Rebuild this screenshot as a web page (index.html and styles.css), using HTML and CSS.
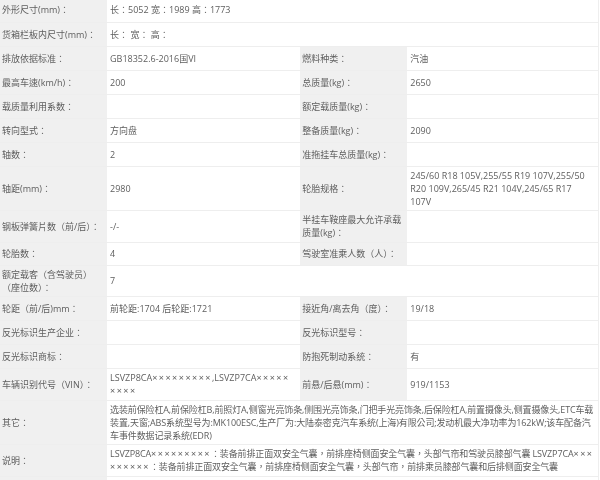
FILE: index.html
```html
<!DOCTYPE html>
<html lang="zh-TW">
<head>
<meta charset="utf-8">
<title>车辆参数</title>
<link rel="stylesheet" href="styles.css">
</head>
<body>
<table class="spec">
<colgroup><col class="c-l"><col class="c-v"><col class="c-l"><col class="c-v2"></colgroup>
<tr class="r24"><th>外形尺寸(mm)：</th><td colspan="3">长：5052 宽：1989 高：1773</td></tr>
<tr class="r24"><th>货箱栏板内尺寸(mm)：</th><td colspan="3">长： 宽： 高：</td></tr>
<tr class="r24"><th>排放依据标准：</th><td>GB18352.6-2016国VI</td><th>燃料种类：</th><td>汽油</td></tr>
<tr class="r24"><th>最高车速(km/h)：</th><td>200</td><th>总质量(kg)：</th><td>2650</td></tr>
<tr class="r24"><th>载质量利用系数：</th><td></td><th>额定载质量(kg)：</th><td></td></tr>
<tr class="r24"><th>转向型式：</th><td>方向盘</td><th>整备质量(kg)：</th><td>2090</td></tr>
<tr class="r24"><th>轴数：</th><td>2</td><th>准拖挂车总质量(kg)：</th><td></td></tr>
<tr class="r44"><th>轴距(mm)：</th><td>2980</td><th>轮胎规格：</th><td>245/60 R18 105V,255/55 R19 107V,255/50 R20 109V,265/45 R21 104V,245/65 R17 107V</td></tr>
<tr class="r32"><th>钢板弹簧片数（前/后）：</th><td>-/-</td><th>半挂车鞍座最大允许承载质量(kg)：</th><td></td></tr>
<tr class="r23"><th>轮胎数：</th><td>4</td><th>驾驶室准乘人数（人）：</th><td></td></tr>
<tr class="r31"><th>额定载客（含驾驶员）（座位数）：</th><td colspan="3">7</td></tr>
<tr class="r24"><th>轮距（前/后)mm：</th><td>前轮距:1704 后轮距:1721</td><th>接近角/离去角（度）：</th><td>19/18</td></tr>
<tr class="r24"><th>反光标识生产企业：</th><td></td><th>反光标识型号：</th><td></td></tr>
<tr class="r24"><th>反光标识商标：</th><td></td><th>防抱死制动系统：</th><td>有</td></tr>
<tr class="r32"><th>车辆识别代号（VIN）：</th><td>LSVZP8CA<span class="x">×××××××××</span>,LSVZP7CA<span class="x">×××××××××</span></td><th>前悬/后悬(mm)：</th><td>919/1153</td></tr>
<tr class="r44"><th>其它：</th><td class="long" colspan="3">选装前保险杠A,前保险杠B,前照灯A,侧窗光亮饰条,侧围光亮饰条,门把手光亮饰条,后保险杠A,前置摄像头,侧置摄像头,ETC车载装置,天窗;ABS系统型号为:MK100ESC,生产厂为:大陆泰密克汽车系统(上海)有限公司;发动机最大净功率为162kW;该车配备汽车事件数据记录系统(EDR)</td></tr>
<tr class="r32"><th>说明：</th><td class="long" colspan="3">LSVZP8CA<span class="x">×××××××××</span>：装备前排正面双安全气囊，前排座椅侧面安全气囊，头部气帘和驾驶员膝部气囊 LSVZP7CA<span class="x">×××××××××</span>：装备前排正面双安全气囊，前排座椅侧面安全气囊，头部气帘，前排乘员膝部气囊和后排侧面安全气囊</td></tr>
<tr class="r24"><th></th><td colspan="3"></td></tr>
</table>
</body>
</html>
```
FILE: styles.css
```css
html, body {
  margin: 0;
  padding: 0;
  background: #fff;
  overflow: hidden;
  height: 480px;
}
.spec {
  width: 599px;
  margin-top: -2px;
  border-collapse: collapse;
  table-layout: fixed;
  font-family: "Open Sans", "Noto Sans CJK TC", sans-serif;
  font-size: 9px;
  line-height: 13px;
  color: #5e5e5e;
  border-right: 1px solid #eee;
  filter: blur(0.3px);
}
.c-l { width: 107px; }
.c-v { width: 193px; }
.c-v2 { width: 191px; }
.spec th, .spec td {
  padding: 0 6px 0 3px;
  border-bottom: 1px solid #eee;
  font-weight: normal;
  text-align: left;
  vertical-align: middle;
  overflow: hidden;
}
.spec th {
  background: #f0f0f0;
  padding: 0 2px;
}
.spec .long {
  padding-right: 3px;
  letter-spacing: -0.13px;
}
.x { letter-spacing: 1.5px; word-break: break-all; }
.r23 { height: 23px; }
.r24 { height: 24px; }
.r31 { height: 31px; }
.r32 { height: 32px; }
.r44 { height: 44px; }
```
